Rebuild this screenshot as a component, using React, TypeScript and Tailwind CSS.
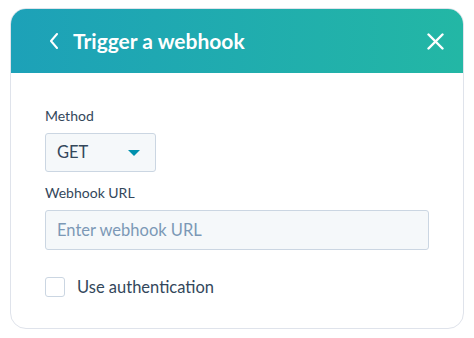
const App = () => {
  return (
    <main className="w-[474px] h-[338px] bg-white pt-2 px-[10px] font-['Lato',sans-serif]">
      <div className="w-[454px] h-[321px] rounded-[16px] border border-[#dfe3eb] overflow-hidden flex flex-col">
        <header className="h-16 flex items-center justify-between pl-[39px] pr-[19px] bg-[linear-gradient(90deg,#1da1b8,#23b7a5)] text-white">
          <div className="flex items-center gap-[15px]">
            <svg width="8" height="16" viewBox="0 0 8 16" fill="none" stroke="currentColor" strokeWidth="2" strokeLinecap="round" strokeLinejoin="round">
              <polyline points="7,1 1,8 7,15" />
            </svg>
            <h1 className="text-[21px] font-bold leading-none mb-[1px]">Trigger a webhook</h1>
          </div>
          <svg width="17" height="17" viewBox="0 0 17 17" fill="none" stroke="currentColor" strokeWidth="2.4" strokeLinecap="round">
            <line x1="1.5" y1="1.5" x2="15.5" y2="15.5" />
            <line x1="15.5" y1="1.5" x2="1.5" y2="15.5" />
          </svg>
        </header>

        <section className="flex flex-col px-[34px] pt-[33px]">
          <label className="text-[14px] text-[#33475b] leading-5">Method</label>
          <div className="mt-[7px] w-[111px] h-[39px] flex items-center justify-between pl-[11px] pr-[15px] bg-[#f5f8fa] border border-[#cbd6e2] rounded-[3px]">
            <span className="text-[16.5px] text-[#33475b]">GET</span>
            <span className="w-0 h-0 border-l-[6px] border-r-[6px] border-t-[6px] border-l-transparent border-r-transparent border-t-[#0091ae]" />
          </div>

          <label className="mt-[11px] text-[14px] text-[#33475b] leading-5">Webhook URL</label>
          <div className="mt-[7px] w-[384px] h-[40px] flex items-center px-[11px] bg-[#f5f8fa] border border-[#cbd6e2] rounded-[3px]">
            <span className="text-[16.5px] text-[#7c98b6]">Enter webhook URL</span>
          </div>

          <label className="mt-[27px] flex items-center gap-[12px]">
            <span className="w-[20px] h-[20px] rounded-[3px] border border-[#cbd6e2] bg-white" />
            <span className="text-[16.5px] text-[#33475b] leading-5">Use authentication</span>
          </label>
        </section>
      </div>
    </main>
  );
};

export default App;
